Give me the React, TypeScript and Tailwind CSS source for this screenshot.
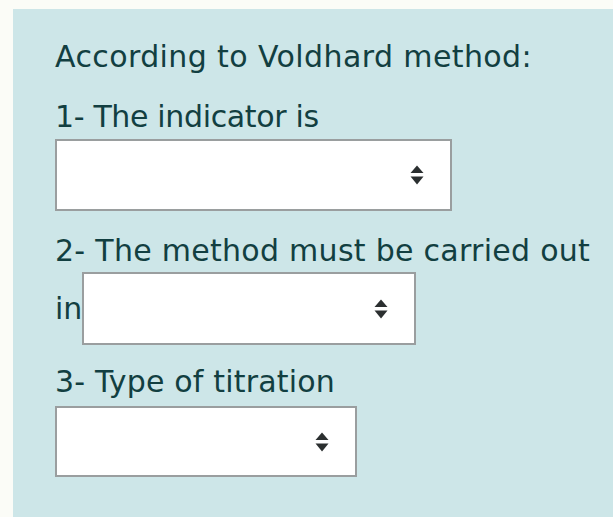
import React from "react";

function Arrows() {
  return (
    <svg width="14" height="20" viewBox="0 0 14 20" className="shrink-0">
      <path d="M7 0.5 L13.5 8 L0.5 8 Z" fill="#2b2f30" />
      <path d="M0.5 11.5 L13.5 11.5 L7 19.5 Z" fill="#2b2f30" />
    </svg>
  );
}

function FakeSelect({ w, h }: { w: string; h: string }) {
  return (
    <div
      className={`${w} ${h} bg-white border-2 border-[#9a9e9f] flex items-center justify-end pr-[26px] shrink-0`}
    >
      <Arrows />
    </div>
  );
}

export default function App() {
  return (
    <div className="w-[613px] h-[517px] bg-[#fbfcf7] pt-[9px] pl-[13px] overflow-hidden">
      <div className="h-full bg-[#cde6e8] pl-[42px] pt-[30px] font-['DejaVu_Sans',sans-serif] text-[30px] leading-[36px] text-[#123f41]">
        <div className="tracking-[0.4px] whitespace-nowrap">According to Voldhard method:</div>
        <div className="mt-[24px] tracking-[-0.35px] whitespace-nowrap">1- The indicator is</div>
        <div className="mt-[4px]">
          <FakeSelect w="w-[397px]" h="h-[72px]" />
        </div>
        <div className="mt-[22px] tracking-[0.28px] whitespace-nowrap">2- The method must be carried out</div>
        <div className="mt-[3px] flex items-center">
          <span className="w-[27px] whitespace-nowrap">in</span>
          <FakeSelect w="w-[334px]" h="h-[73px]" />
        </div>
        <div className="mt-[19px] tracking-[0.18px] whitespace-nowrap">3- Type of titration</div>
        <div className="mt-[6px]">
          <FakeSelect w="w-[302px]" h="h-[71px]" />
        </div>
      </div>
    </div>
  );
}
